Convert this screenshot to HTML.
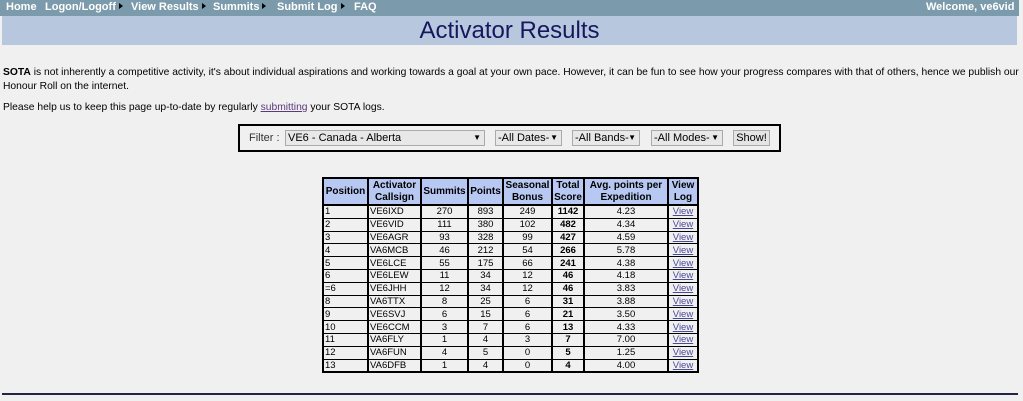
<!DOCTYPE html>
<html><head><meta charset="utf-8"><style>
body{margin:0;background:#f0f0f0;font-family:"Liberation Sans",sans-serif;width:1023px;height:401px;overflow:hidden;position:relative}
.nav{position:absolute;left:0;top:0;width:1019px;height:16px;background:#7b9aab;color:#fff;font-size:11px;font-weight:bold;line-height:15px}
.nav span{position:absolute;top:0;white-space:nowrap}
.tri{display:inline-block;width:0;height:0;border-left:4px solid #000;border-top:3.5px solid transparent;border-bottom:3.5px solid transparent;margin-left:3px;vertical-align:1px}
.title{position:absolute;left:2px;top:16px;width:1015px;height:29px;background:#b7c8de;text-align:center;color:#17175e;font-family:"Liberation Sans",sans-serif;font-size:24px;line-height:29px}
.p{position:absolute;left:3px;font-family:"Liberation Sans",sans-serif;font-size:10.3px;color:#000;white-space:nowrap;line-height:14px}
.p a{color:#5a3a7a}
.filter{position:absolute;left:238px;top:124px;width:539px;height:24px;border:2px solid #000;font-family:"Liberation Sans",sans-serif;font-size:11px}
.sel{position:absolute;top:4px;height:14px;border:1px solid #aaa;background:#e8e8e8;line-height:14px;padding-left:2px;box-sizing:content-box;color:#000}
.sel i{position:absolute;right:3px;top:0;font-style:normal;font-size:8px}
table{position:absolute;left:322px;top:177px;width:375px;table-layout:fixed;border-collapse:collapse;border:2px solid #000;font-family:"Liberation Sans",sans-serif;font-size:9.5px}
td,th{border:1px solid #000;padding:0 1px;height:11.8px;line-height:11px;text-align:center;white-space:nowrap;overflow:hidden}
th{background:#b7c8f2;font-size:10px;line-height:12px;height:25px;border:2px solid #000;font-weight:bold;color:#000}
td{background:#f0f0f0;border-left:2px solid #000;border-right:2px solid #000}
td.l{text-align:left}
td.b{font-weight:bold}
td a{color:#4a4a9a}
.hr{position:absolute;left:2px;top:393px;width:1016px;height:2px;background:#24244a}
</style></head><body>
<div class="nav">
<span style="left:6px">Home</span>
<span style="left:45px">Logon/Logoff<i class="tri"></i></span>
<span style="left:131px">View Results<i class="tri"></i></span>
<span style="left:213px">Summits<i class="tri"></i></span>
<span style="left:277px">Submit Log<i class="tri"></i></span>
<span style="left:354px">FAQ</span>
<span style="left:926px">Welcome, ve6vid</span>
</div>
<div class="title">Activator Results</div>
<div class="p" style="top:66px"><b>SOTA</b> is not inherently a competitive activity, it's about individual aspirations and working towards a goal at your own pace. However, it can be fun to see how your progress compares with that of others, hence we publish our<br>Honour Roll on the internet.</div>
<div class="p" style="top:101px">Please help us to keep this page up-to-date by regularly <a href="#">submitting</a> your SOTA logs.</div>
<div class="filter">
<span style="position:absolute;left:9px;top:6px;color:#333">Filter :</span>
<div class="sel" style="left:45px;width:196px">VE6 - Canada - Alberta<i>▼</i></div>
<div class="sel" style="left:255px;width:63px">-All Dates-<i>▼</i></div>
<div class="sel" style="left:332px;width:64px">-All Bands-<i>▼</i></div>
<div class="sel" style="left:411px;width:68px">-All Modes-<i>▼</i></div>
<div class="sel" style="left:493px;width:35px;background:#e4e4e4;text-align:center;padding:0">Show!</div>
</div>
<table>
<colgroup><col style="width:45px"><col style="width:53px"><col style="width:47px"><col style="width:35px"><col style="width:49px"><col style="width:32px"><col style="width:84px"><col style="width:30px"></colgroup>
<tr><th>Position</th><th>Activator<br>Callsign</th><th>Summits</th><th>Points</th><th>Seasonal<br>Bonus</th><th>Total<br>Score</th><th>Avg. points per<br>Expedition</th><th>View<br>Log</th></tr>
<tr><td class="l">1</td><td class="l">VE6IXD</td><td>270</td><td>893</td><td>249</td><td class="b">1142</td><td>4.23</td><td><a href="#">View</a></td></tr>
<tr><td class="l">2</td><td class="l">VE6VID</td><td>111</td><td>380</td><td>102</td><td class="b">482</td><td>4.34</td><td><a href="#">View</a></td></tr>
<tr><td class="l">3</td><td class="l">VE6AGR</td><td>93</td><td>328</td><td>99</td><td class="b">427</td><td>4.59</td><td><a href="#">View</a></td></tr>
<tr><td class="l">4</td><td class="l">VA6MCB</td><td>46</td><td>212</td><td>54</td><td class="b">266</td><td>5.78</td><td><a href="#">View</a></td></tr>
<tr><td class="l">5</td><td class="l">VE6LCE</td><td>55</td><td>175</td><td>66</td><td class="b">241</td><td>4.38</td><td><a href="#">View</a></td></tr>
<tr><td class="l">6</td><td class="l">VE6LEW</td><td>11</td><td>34</td><td>12</td><td class="b">46</td><td>4.18</td><td><a href="#">View</a></td></tr>
<tr><td class="l">=6</td><td class="l">VE6JHH</td><td>12</td><td>34</td><td>12</td><td class="b">46</td><td>3.83</td><td><a href="#">View</a></td></tr>
<tr><td class="l">8</td><td class="l">VA6TTX</td><td>8</td><td>25</td><td>6</td><td class="b">31</td><td>3.88</td><td><a href="#">View</a></td></tr>
<tr><td class="l">9</td><td class="l">VE6SVJ</td><td>6</td><td>15</td><td>6</td><td class="b">21</td><td>3.50</td><td><a href="#">View</a></td></tr>
<tr><td class="l">10</td><td class="l">VE6CCM</td><td>3</td><td>7</td><td>6</td><td class="b">13</td><td>4.33</td><td><a href="#">View</a></td></tr>
<tr><td class="l">11</td><td class="l">VA6FLY</td><td>1</td><td>4</td><td>3</td><td class="b">7</td><td>7.00</td><td><a href="#">View</a></td></tr>
<tr><td class="l">12</td><td class="l">VA6FUN</td><td>4</td><td>5</td><td>0</td><td class="b">5</td><td>1.25</td><td><a href="#">View</a></td></tr>
<tr><td class="l">13</td><td class="l">VA6DFB</td><td>1</td><td>4</td><td>0</td><td class="b">4</td><td>4.00</td><td><a href="#">View</a></td></tr>
</table>
<div class="hr"></div>
</body></html>
